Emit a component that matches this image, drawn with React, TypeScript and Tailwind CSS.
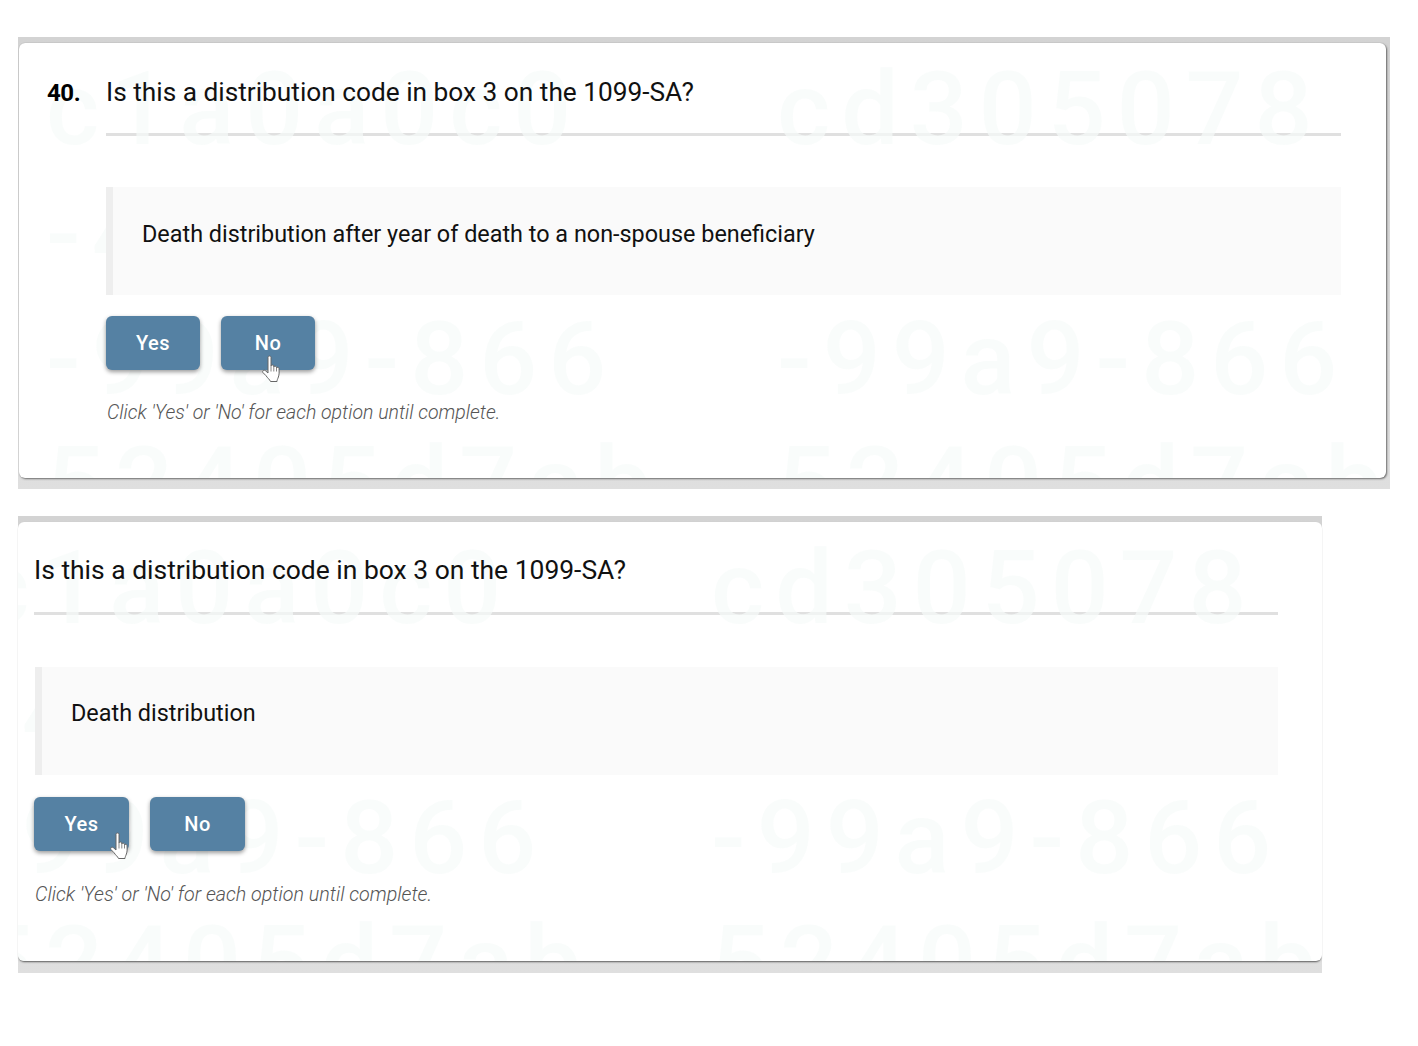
const FONT = "font-['Roboto',sans-serif]";

function Hand({ className }: { className: string }) {
  return (
    <svg className={className} width="20" height="28" viewBox="0 0 20 28">
      <path
        d="M6 2.500c0-2 3-2 3 0V11c.2-1.300 2.600-1.300 2.800 0v1c.3-1.200 2.400-1.200 2.700.2v.8c.4-1.100 2.400-1 2.500.5.2 3.500.3 6-.6 8.500-.7 2-1.400 3-1.400 4.500H8.500c-.8-2-3-3.500-4.500-5.800L.9 17.500c-1-1.800 1.200-3.100 2.500-1.800L6 18z"
        fill="#fff"
        stroke="#666"
        strokeWidth="1"
        strokeLinejoin="round"
      />
      <path d="M9 11v5.500M11.800 12v4.500M14.500 13v3.500" stroke="#666" strokeWidth=".8" fill="none" />
    </svg>
  );
}

function Button({ label, className }: { label: string; className: string }) {
  return (
    <button className={"h-[54px] rounded-[6px] bg-[#5581a3] text-white text-[20px] font-medium tracking-[0.4px] shadow-[0_2px_4px_rgba(0,0,0,0.4)] " + className}>
      {label}
    </button>
  );
}

const ROWS = [
  ["c1a0a0c0", "cd305078"],
  ["-4e2b-4f6", "-4e2b-4f6"],
  ["-99a9-866", "-99a9-866"],
  ["52405d7ab", "52405d7ab"],
];

function Watermark({ gridClass }: { gridClass: string }) {
  return (
    <div className={"pointer-events-none absolute inset-0 z-10 grid auto-rows-[125px] whitespace-nowrap pt-[4px] text-[102px] font-medium leading-[125px] tracking-[11px] text-[rgba(247,251,250,0.7)] " + gridClass}>
      {ROWS.flat().map((text, i) => (
        <div key={i}>{text}</div>
      ))}
    </div>
  );
}

function Body({ option, titleClass, boxClass }: { option: string; titleClass: string; boxClass: string }) {
  return (
    <>
      <div className={"relative z-20 leading-[38px] " + titleClass}>Is this a distribution code in box 3 on the 1099-SA?</div>
      <div className="h-[3px] bg-[#e0e0e0]" />
      <div className={"relative z-20 h-[108px] border-l-[7px] border-[#eeeeee] bg-[#fafafa] pl-[29px] text-[23.400px] " + boxClass}>
        {option}
      </div>
    </>
  );
}

export default function App() {
  return (
    <div className={"min-h-[1046px] bg-white pl-[18px] pt-[37px] text-[#111] " + FONT}>
      <section className="h-[452px] w-[1372px] bg-gradient-to-b from-[#d3d3d3] via-[#d8d8d8] to-[#dfdfdf] pb-[11px] pl-px pr-[4px] pt-[6px]">
        <div className="relative h-[435px] overflow-hidden rounded-[6px] bg-white shadow-[1px_1px_2px_rgba(0,0,0,0.5),0_0_1px_rgba(0,0,0,0.2)]">
          <Watermark gridClass="grid-cols-[731px_1fr] pl-[27px]" />
          <div className="flex pl-[27px] pt-[30px]">
            <div className="relative z-20 w-[60px] pl-px text-[24px] font-bold leading-[40px] tracking-[-0.4px] text-black">40.</div>
            <div className="w-[1235px]">
              <Body
                option="Death distribution after year of death to a non-spouse beneficiary"
                titleClass="h-[60px] text-[26.250px]"
                boxClass="mt-[51px] pt-[27px] leading-[40px]"
              />
              <div className="relative z-20 mt-[21px] flex gap-[21px]">
                <Button label="Yes" className="w-[94px]" />
                <Button label="No" className="w-[94px]" />
                <Hand className="absolute left-[156px] top-[39px]" />
              </div>
              <p className="relative z-20 mt-[28px] pl-px text-[19.500px] font-light italic text-[#555]">Click 'Yes' or 'No' for each option until complete.</p>
            </div>
          </div>
        </div>
      </section>
      <section className="mt-[27px] h-[457px] w-[1304px] bg-gradient-to-b from-[#d3d3d3] via-[#d8d8d8] to-[#dfdfdf] pb-[12px] pt-[6px]">
        <div className="relative h-[439px] overflow-hidden rounded-[6px] bg-white shadow-[0_2px_2px_-1px_rgba(0,0,0,0.6),0_0_1px_rgba(0,0,0,0.08)]">
          <Watermark gridClass="grid-cols-[735px_1fr] ml-[-42px]" />
          <div className="ml-[16px] w-[1244px] pt-[29px]">
            <Body option="Death distribution" titleClass="h-[61px] text-[26.450px]" boxClass="ml-px mt-[52px] pt-[26px] leading-[40px]" />
            <div className="relative z-20 mt-[22px] flex gap-[21px]">
              <Button label="Yes" className="w-[95px]" />
              <Button label="No" className="w-[95px]" />
              <Hand className="absolute left-[76px] top-[35px]" />
            </div>
            <p className="relative z-20 mt-[29px] pl-px text-[19.700px] font-light italic text-[#555]">Click 'Yes' or 'No' for each option until complete.</p>
          </div>
        </div>
      </section>
    </div>
  );
}
